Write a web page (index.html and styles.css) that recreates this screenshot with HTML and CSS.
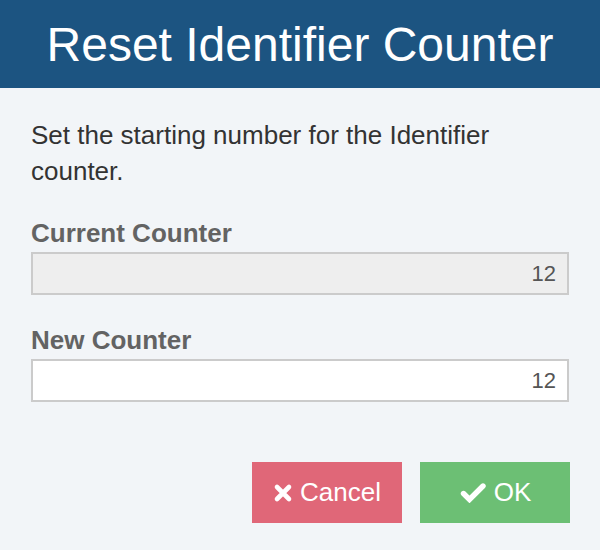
FILE: index.html
```html
<!DOCTYPE html>
<html lang="en">
<head>
    <meta charset="UTF-8">
    <meta name="viewport" content="width=device-width, initial-scale=1.0">
    <title>Reset Identifier Counter</title>
    <link rel="stylesheet" href="styles.css">
</head>
<body>
    <div class="dialog">
        <div class="dialog-header">
            <h1>Reset Identifier Counter</h1>
        </div>
        <form class="dialog-body" id="reset-counter-form">
            <p class="dialog-intro">Set the starting number for the Identifier counter.</p>
            <div class="field">
                <label for="current-counter">Current Counter</label>
                <input type="text" id="current-counter" value="12" disabled>
            </div>
            <div class="field">
                <label for="new-counter">New Counter</label>
                <input type="text" id="new-counter" value="12">
            </div>
            <div class="dialog-buttons">
                <button type="button" class="btn btn-cancel">
                    <svg class="icon-times" viewBox="0 0 20 20"><path d="M4 4 L16 16 M16 4 L4 16"/></svg>
                    Cancel
                </button>
                <button type="button" class="btn btn-ok">
                    <svg class="icon-check" viewBox="0 0 28 20"><path d="M4.5 10.5 L10.5 16.5 L24 3"/></svg>
                    OK
                </button>
            </div>
        </form>
    </div>
</body>
</html>
```

FILE: styles.css
```css
body {
    font-family: "Liberation Sans", Arial, sans-serif;
    margin: 0;
    background-color: #f2f5f8;
    color: #333;
}
.dialog {
    width: 600px;
    height: 550px;
    display: flex;
    flex-direction: column;
}
.dialog-header {
    height: 88px;
    background-color: #1c5481;
    display: flex;
    justify-content: center;
    align-items: center;
}
.dialog-header h1 {
    margin: 0;
    color: #fff;
    font-weight: normal;
    font-size: 48px;
    line-height: 54px;
    padding-top: 1px;
}
.dialog-body {
    display: flex;
    flex-direction: column;
    padding: 29px 30px 0 31px;
}
.dialog-intro {
    margin: 0 0 29px;
    font-size: 26px;
    line-height: 36px;
    color: #333;
}
.field {
    display: flex;
    flex-direction: column;
    gap: 4px;
    margin-bottom: 30px;
}
.field label {
    font-size: 26px;
    line-height: 30px;
    font-weight: bold;
    color: #636363;
}
.field input {
    height: 43px;
    box-sizing: border-box;
    border: 2px solid #cbcbcb;
    background: #fff;
    font-family: inherit;
    font-size: 22px;
    color: #555;
    text-align: right;
    padding: 0 11px;
    margin: 0;
    width: 538px;
}
.field input:disabled {
    background: #eee;
    color: #555;
}
.dialog-buttons {
    display: flex;
    justify-content: flex-end;
    gap: 18px;
    margin-top: 30px;
}
.btn {
    width: 150px;
    height: 61px;
    border: none;
    color: #fff;
    font-family: inherit;
    font-size: 26px;
    display: flex;
    align-items: center;
    justify-content: center;
    gap: 7px;
    cursor: pointer;
    padding: 0;
}
.btn svg {
    fill: none;
    stroke: #fff;
}
.btn-cancel {
    background-color: #e06778;
}
.btn-ok {
    background-color: #6cbf74;
}
.icon-times {
    width: 20px;
    height: 20px;
    stroke-width: 4.6;
    stroke-linecap: round;
}
.icon-check {
    width: 28px;
    height: 20px;
    stroke-width: 5.4;
    stroke-linecap: round;
}
```
